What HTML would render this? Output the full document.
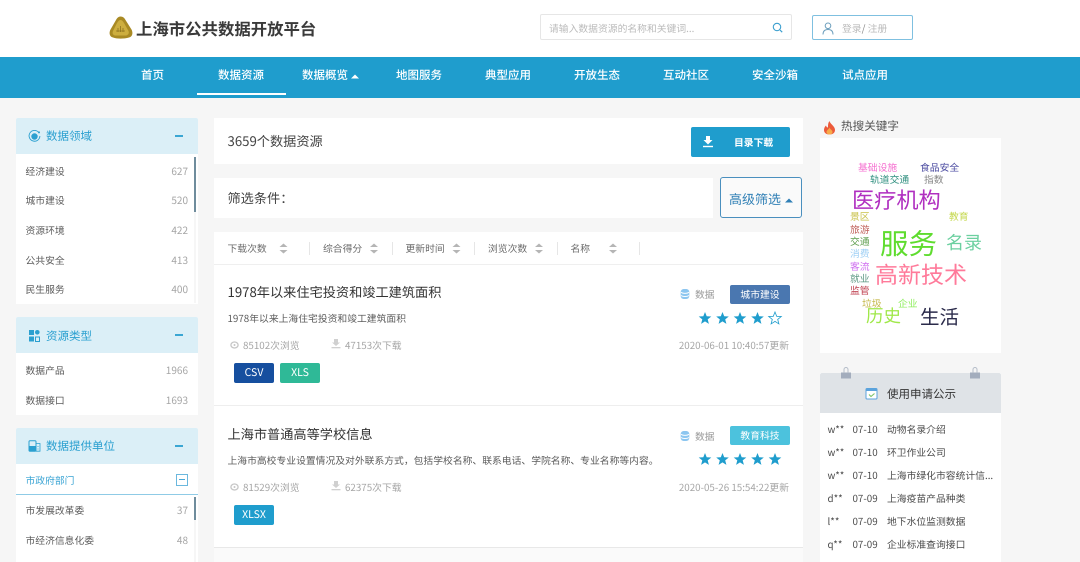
<!DOCTYPE html>
<html lang="zh">
<head>
<meta charset="utf-8">
<title>上海市公共数据开放平台</title>
<style>
html,body{margin:0;padding:0;width:1080px;height:562px;overflow:hidden;background:#f6f6f6}
body{position:relative;font-family:"Noto Sans CJK SC","Liberation Sans",sans-serif;color:#555;text-rendering:geometricPrecision}
#p{position:absolute;left:0;top:0;width:1080px;height:562px;overflow:hidden;filter:blur(.3px)}
.b{position:absolute;box-sizing:border-box}
.t{position:absolute;white-space:nowrap;line-height:20px;margin-top:-10px}
.r{text-align:right}
.n{font-size:11.5px;color:#fff;font-weight:500}
.h{font-size:11.5px;color:#2ba0d0}
.i{font-size:9.8px;color:#5c5c5c;left:25.5px;margin-top:-10.5px}
.c{font-size:10px;color:#a5a5a5;right:892px;margin-top:-10.5px}
.s{font-size:9.8px;color:#6c6c6c}
.ti{font-size:13.2px;color:#333;left:227.5px}
.d{font-size:9.8px;color:#5c5c5c;left:227.5px}
.m{font-size:9.8px;color:#a5a5a5}
.w{font-size:9.8px;line-height:14px;margin-top:-7px}
.u{font-size:9.8px;color:#4c4c4c;margin-top:-10.5px}
.tag{position:absolute;box-sizing:border-box;border-radius:2px;color:#fff;text-align:center;font-size:10.5px;line-height:20px;height:20px}
.mn{position:absolute;left:175px;width:8px;height:2px;background:#3aa6d3}
svg{position:absolute;overflow:visible}
</style>
</head>
<body>
<div id="p">
<!-- header -->
<div class="b" style="left:0;top:0;width:1080px;height:57px;background:#fff"></div>
<svg style="left:109px;top:16px" width="24" height="23" viewBox="0 0 24 23">
<path d="M11.500 .5C14 .5 15.500 2 16.500 4L22.500 13.500C24.500 17.500 23 21 20 21.500C15 23 8 23 4 21.500C1 21 -.5 17.500 1.500 13.500L7 4C8 2 9.500 .5 11.500 .5Z" fill="#a98a24"/>
<path d="M11.500 4C13 4 14 5.500 15 7L19.500 15C20.500 17.500 19 19 17 19.500H6C4 19 3 17.500 4 15L8 7C9 5.500 10 4 11.500 4Z" fill="#cdae3f"/>
<path d="M7 15h9M9 12v4M11.500 10v6M14 12v4" stroke="#8e7420" stroke-width=".8" fill="none"/>
</svg>
<div class="t" style="left:136px;top:28px;font-size:16.4px;font-weight:700;color:#3a3a3a">上海市公共数据开放平台</div>
<div class="b" style="left:540px;top:14px;width:252px;height:26px;border:1px solid #e6e6e6;border-radius:2px;background:#fff"></div>
<div class="t" style="left:549px;top:28px;font-size:9.8px;color:#bbb">请输入数据资源的名称和关键词...</div>
<svg style="left:772px;top:22px" width="11" height="11" viewBox="0 0 11 11"><circle cx="5" cy="5" r="3.7" fill="none" stroke="#3c9fcf" stroke-width="1.1"/><path d="M8 8l2.200 2.200" stroke="#3c9fcf" stroke-width="1.200"/></svg>
<div class="b" style="left:812px;top:15px;width:101px;height:25px;border:1px solid #7fc0e0;border-radius:2px;background:#fff"></div>
<svg style="left:822px;top:22px" width="12" height="13" viewBox="0 0 12 13"><circle cx="6" cy="3.800" r="2.800" fill="none" stroke="#6d9fbd" stroke-width="1"/><path d="M1 12.500C1 9 3 7.500 6 7.500S11 9 11 12.500" fill="none" stroke="#6d9fbd" stroke-width="1"/></svg>
<div class="t" style="left:842px;top:28px;font-size:9.800px;color:#bbb">登录<span style="color:#888">/</span> 注册</div>

<!-- nav -->
<div class="b" style="left:0;top:57px;width:1080px;height:41px;background:#1f9dcd"></div>
<div class="t n" style="left:141px;top:75px">首页</div>
<div class="t n" style="left:218px;top:75px">数据资源</div>
<div class="t n" style="left:302px;top:75px">数据概览</div>
<svg style="left:351px;top:74px" width="8" height="5" viewBox="0 0 8 5"><path d="M0 4.500L4 .5L8 4.500Z" fill="#fff"/></svg>
<div class="t n" style="left:396px;top:75px">地图服务</div>
<div class="t n" style="left:485px;top:75px">典型应用</div>
<div class="t n" style="left:574px;top:75px">开放生态</div>
<div class="t n" style="left:663px;top:75px">互动社区</div>
<div class="t n" style="left:752px;top:75px">安全沙箱</div>
<div class="t n" style="left:842px;top:75px">试点应用</div>
<div class="b" style="left:197px;top:93px;width:89px;height:2px;background:#fff"></div>

<!-- left panel 1 -->
<div class="b" style="left:16px;top:118px;width:182px;height:186px;background:#fff;border-radius:2px 2px 0 0"></div>
<div class="b" style="left:16px;top:118px;width:182px;height:36px;background:#dbeff7;border-radius:2px 2px 0 0"></div>
<svg style="left:28px;top:130px" width="13" height="13" viewBox="0 0 13 13"><path d="M10.500 2.200A5.400 5.400 0 1 0 11.900 6" fill="none" stroke="#2ba0d0" stroke-width=".9"/><circle cx="6.500" cy="6.500" r="3.200" fill="#2ba0d0"/><circle cx="11" cy="2.400" r="1" fill="#2ba0d0"/></svg>
<div class="t h" style="left:46px;top:136px">数据领域</div>
<div class="mn" style="top:135px"></div>
<div class="t i" style="top:171px">经济建设</div><div class="t c" style="top:171px">627</div>
<div class="t i" style="top:200px">城市建设</div><div class="t c" style="top:200px">520</div>
<div class="t i" style="top:230px">资源环境</div><div class="t c" style="top:230px">422</div>
<div class="t i" style="top:260px">公共安全</div><div class="t c" style="top:260px">413</div>
<div class="t i" style="top:289px">民生服务</div><div class="t c" style="top:289px">400</div>
<div class="b" style="left:194px;top:157px;width:2px;height:146px;background:#f6f6f6"></div>
<div class="b" style="left:194px;top:157px;width:2px;height:55px;background:#6f8c9c"></div>

<!-- left panel 2 -->
<div class="b" style="left:16px;top:317px;width:182px;height:98px;background:#fff;border-radius:2px 2px 0 0"></div>
<div class="b" style="left:16px;top:317px;width:182px;height:36px;background:#dbeff7;border-radius:2px 2px 0 0"></div>
<svg style="left:28px;top:329px" width="12" height="13" viewBox="0 0 12 13"><rect x="1" y="1" width="5" height="5" fill="#2ba0d0"/><circle cx="9.300" cy="3.300" r="2.300" fill="#2ba0d0"/><rect x="1" y="7.500" width="5" height="5" fill="#2ba0d0"/><rect x="7.500" y="8" width="4" height="4.500" fill="none" stroke="#2ba0d0"/></svg>
<div class="t h" style="left:46px;top:336px">资源类型</div>
<div class="mn" style="top:334px"></div>
<div class="t i" style="top:370px">数据产品</div><div class="t c" style="top:370px">1966</div>
<div class="t i" style="top:400px">数据接口</div><div class="t c" style="top:400px">1693</div>

<!-- left panel 3 -->
<div class="b" style="left:16px;top:428px;width:182px;height:134px;background:#fff;border-radius:2px 2px 0 0"></div>
<div class="b" style="left:16px;top:428px;width:182px;height:36px;background:#dbeff7;border-radius:2px 2px 0 0"></div>
<svg style="left:28px;top:440px" width="13" height="12" viewBox="0 0 13 12"><rect x="1" y=".8" width="7" height="10.400" rx="1" fill="none" stroke="#2ba0d0"/><rect x="1" y="6" width="7" height="5.200" fill="#2ba0d0"/><path d="M8 3.500h4v7.700H8M10 6v1M10 8.500v1" fill="none" stroke="#2ba0d0" stroke-width=".8"/></svg>
<div class="t h" style="left:46px;top:446px">数据提供单位</div>
<div class="mn" style="top:445px"></div>
<div class="t" style="left:25.500px;top:480px;font-size:9.800px;color:#3aa4d4">市政府部门</div>
<div class="b" style="left:176px;top:474px;width:12px;height:12px;border:1px solid #6bb8de"></div>
<div class="b" style="left:179px;top:479px;width:6px;height:1px;background:#4aa8d6"></div>
<div class="b" style="left:16px;top:494px;width:182px;height:1px;background:#8fcbe6"></div>
<div class="t i" style="top:510px">市发展改革委</div><div class="t c" style="top:510px">37</div>
<div class="t i" style="top:540px">市经济信息化委</div><div class="t c" style="top:540px">48</div>
<div class="b" style="left:194px;top:497px;width:2px;height:65px;background:#f6f6f6"></div>
<div class="b" style="left:194px;top:497px;width:2px;height:23px;background:#6f8c9c"></div>

<!-- main top -->
<div class="b" style="left:214px;top:118px;width:589px;height:46px;background:#fff"></div>
<div class="t" style="left:227.500px;top:141px;font-size:13.200px;color:#444">3659个数据资源</div>
<div class="b" style="left:691px;top:127px;width:99px;height:30px;background:#1f9dcd;border-radius:2px"></div>
<svg style="left:702px;top:136px" width="12" height="12" viewBox="0 0 12 12"><path d="M4 0h4v4h2.500L6 8.500 1.500 4H4Z" fill="#fff"/><rect x="1" y="9.800" width="10" height="1.400" fill="#fff"/></svg>
<div class="t" style="left:734px;top:142px;font-size:9.800px;font-weight:700;color:#fff">目录下载</div>

<div class="b" style="left:214px;top:178px;width:499px;height:40px;background:#fff"></div>
<div class="t" style="left:227.500px;top:198px;font-size:13.200px;color:#444">筛选条件：</div>
<div class="b" style="left:720px;top:177px;width:82px;height:41px;border:1px solid #4a8fbe;border-radius:3px;background:#fafafa"></div>
<div class="t" style="left:729px;top:199px;font-size:13px;color:#2f7fb5">高级筛选</div>
<svg style="left:785px;top:198px" width="8" height="5" viewBox="0 0 8 5"><path d="M0 4.500L4 .5L8 4.500Z" fill="#2f7fb5"/></svg>

<!-- sort -->
<div class="b" style="left:214px;top:232px;width:589px;height:32px;background:#fff"></div>
<div class="b" style="left:214px;top:264px;width:589px;height:1px;background:#efefef"></div>
<div class="t s" style="left:227.500px;top:248px">下载次数</div>
<div class="t s" style="left:323px;top:248px">综合得分</div>
<div class="t s" style="left:405.500px;top:248px">更新时间</div>
<div class="t s" style="left:488px;top:248px">浏览次数</div>
<div class="t s" style="left:570.500px;top:248px">名称</div>
<svg style="left:214px;top:232px" width="589" height="32" viewBox="0 0 589 32">
<g fill="#b5b5b5">
<path d="M65.500 15l4-3.500 4 3.500zM65.500 18l4 3.500 4-3.500z"/>
<path d="M156 15l4-3.500 4 3.500zM156 18l4 3.500 4-3.500z"/>
<path d="M238.500 15l4-3.500 4 3.500zM238.500 18l4 3.500 4-3.500z"/>
<path d="M321 15l4-3.500 4 3.500zM321 18l4 3.500 4-3.500z"/>
<path d="M395 15l4-3.500 4 3.500zM395 18l4 3.500 4-3.500z"/>
</g>
<g fill="#e6e6e6"><rect x="95" y="10" width="1" height="13"/><rect x="178" y="10" width="1" height="13"/><rect x="260" y="10" width="1" height="13"/><rect x="343" y="10" width="1" height="13"/><rect x="425" y="10" width="1" height="13"/></g>
</svg>

<!-- item 1 -->
<div class="b" style="left:214px;top:265px;width:589px;height:140px;background:#fff"></div>
<div class="b" style="left:214px;top:405px;width:589px;height:1px;background:#eee"></div>
<div class="t ti" style="top:292px">1978年以来住宅投资和竣工建筑面积</div>
<div class="t d" style="top:318px">1978年以来上海住宅投资和竣工建筑面积</div>
<svg style="left:230px;top:341px" width="9" height="8" viewBox="0 0 9 8"><ellipse cx="4.500" cy="4" rx="3.600" ry="3" fill="none" stroke="#c5c5c5" stroke-width="1.300"/><circle cx="4.500" cy="4" r="1" fill="#c5c5c5"/></svg>
<div class="t m" style="left:243px;top:345px">85102次浏览</div>
<svg style="left:331px;top:339px" width="10" height="10" viewBox="0 0 10 10"><path d="M3 0h4v3.500h2L5 7 1 3.500h2Z" fill="#d0d0d0"/><rect x=".5" y="8" width="9" height="1.300" fill="#d0d0d0"/></svg>
<div class="t m" style="left:345px;top:345px">47153次下载</div>
<div class="t m r" style="right:291px;top:345px">2020-06-01 10:40:57更新</div>
<svg style="left:680px;top:288px" width="10" height="12" viewBox="0 0 10 12"><rect x=".7" y="1" width="8.600" height="10" rx="3" fill="#8cc6f0"/><path d="M1 4.300c2 1.400 6 1.400 8 0M1 7.500c2 1.400 6 1.400 8 0" stroke="#fff" fill="none"/></svg>
<div class="t" style="left:695px;top:294px;font-size:9.800px;color:#999">数据</div>
<div class="tag" style="left:730px;top:285px;width:60px;height:19px;line-height:19px;background:#4a77b0;font-size:9.800px">城市建设</div>
<svg style="left:698px;top:311px" width="84" height="15" viewBox="0 0 84 15">
<defs><path id="st" d="M0-6.500L1.700-2.200 6.300-2 2.700 .9 3.900 5.400 0 2.900-3.900 5.400-2.700 .9-6.300-2-1.700-2.200Z"/></defs>
<use href="#st" x="7" y="7.500" fill="#1f9dcd"/><use href="#st" x="24.500" y="7.500" fill="#1f9dcd"/><use href="#st" x="42" y="7.500" fill="#1f9dcd"/><use href="#st" x="59.500" y="7.500" fill="#1f9dcd"/><use href="#st" x="77" y="7.500" fill="#fff" stroke="#1f9dcd" stroke-width=".8"/>
</svg>
<div class="tag" style="left:234px;top:363px;width:40px;background:#164f9f">CSV</div>
<div class="tag" style="left:280px;top:363px;width:40px;background:#2fb997">XLS</div>

<!-- item 2 -->
<div class="b" style="left:214px;top:406px;width:589px;height:141px;background:#fff"></div>
<div class="b" style="left:214px;top:547px;width:589px;height:1px;background:#e8e8e8"></div>
<div class="b" style="left:214px;top:548px;width:589px;height:14px;background:#fafafa"></div>
<div class="t ti" style="top:434px">上海市普通高等学校信息</div>
<div class="t d" style="top:460px">上海市高校专业设置情况及对外联系方式，包括学校名称、联系电话、学院名称、专业名称等内容。</div>
<svg style="left:230px;top:483px" width="9" height="8" viewBox="0 0 9 8"><ellipse cx="4.500" cy="4" rx="3.600" ry="3" fill="none" stroke="#c5c5c5" stroke-width="1.300"/><circle cx="4.500" cy="4" r="1" fill="#c5c5c5"/></svg>
<div class="t m" style="left:243px;top:487px">81529次浏览</div>
<svg style="left:331px;top:481px" width="10" height="10" viewBox="0 0 10 10"><path d="M3 0h4v3.500h2L5 7 1 3.500h2Z" fill="#d0d0d0"/><rect x=".5" y="8" width="9" height="1.300" fill="#d0d0d0"/></svg>
<div class="t m" style="left:345px;top:487px">62375次下载</div>
<div class="t m r" style="right:291px;top:487px">2020-05-26 15:54:22更新</div>
<svg style="left:680px;top:430px" width="10" height="12" viewBox="0 0 10 12"><rect x=".7" y="1" width="8.600" height="10" rx="3" fill="#8cc6f0"/><path d="M1 4.300c2 1.400 6 1.400 8 0M1 7.500c2 1.400 6 1.400 8 0" stroke="#fff" fill="none"/></svg>
<div class="t" style="left:695px;top:436px;font-size:9.800px;color:#999">数据</div>
<div class="tag" style="left:730px;top:426px;width:60px;height:19px;line-height:19px;background:#4cc2dd;font-size:9.800px">教育科技</div>
<svg style="left:698px;top:452px" width="84" height="15" viewBox="0 0 84 15">
<use href="#st" x="7" y="7.500" fill="#1f9dcd"/><use href="#st" x="24.500" y="7.500" fill="#1f9dcd"/><use href="#st" x="42" y="7.500" fill="#1f9dcd"/><use href="#st" x="59.500" y="7.500" fill="#1f9dcd"/><use href="#st" x="77" y="7.500" fill="#1f9dcd"/>
</svg>
<div class="tag" style="left:234px;top:505px;width:40px;background:#1f9dcd">XLSX</div>

<!-- hot keywords -->
<svg style="left:823px;top:120px" width="13" height="15" viewBox="0 0 13 15"><path d="M6.500 1C7 4 12 6 12 10C12 13 9.500 14.500 6.500 14.500S1 13 1 10C1 8 2 6.500 3 5.500C3.500 7 4 7.500 5 7.500C5 5 5 3 6.500 1Z" fill="#ec5a3a"/><path d="M6.500 7.500C7 9.500 9.500 10 9.500 12C9.500 13.500 8 14.500 6.500 14.500S3.500 13.500 3.500 12C3.500 10 6 9.500 6.500 7.500Z" fill="#f7ab4a"/></svg>
<div class="t" style="left:841px;top:126px;font-size:11.600px;color:#555">热搜关键字</div>
<div class="b" style="left:820px;top:138px;width:181px;height:215px;background:#fff"></div>
<div class="t w" style="left:858px;top:167px;color:#f56fd0">基础设施</div>
<div class="t w" style="left:920px;top:167px;color:#4a4aa0">食品安全</div>
<div class="t w" style="left:870px;top:179px;color:#2f8f7f">轨道交通</div>
<div class="t w" style="left:924px;top:179px;color:#888">指数</div>
<div class="t w" style="left:852px;top:199px;font-size:22.200px;line-height:30px;margin-top:-15px;color:#b02fc0">医疗机构</div>
<div class="t w" style="left:850px;top:216px;color:#c9c24a">景区</div>
<div class="t w" style="left:949px;top:216px;color:#c5d84f">教育</div>
<div class="t w" style="left:850px;top:229px;color:#c0605a">旅游</div>
<div class="t w" style="left:850px;top:241px;color:#5e9e4f">交通</div>
<div class="t w" style="left:850px;top:253px;color:#9fd0f5">消费</div>
<div class="t w" style="left:850px;top:266px;color:#d070f0">客流</div>
<div class="t w" style="left:850px;top:278px;color:#5f9a85">就业</div>
<div class="t w" style="left:850px;top:290px;color:#c04050">监管</div>
<div class="t w" style="left:880px;top:243px;font-size:28.500px;line-height:36px;margin-top:-18px;color:#5fdc2f">服务</div>
<div class="t w" style="left:946px;top:242px;font-size:18px;line-height:24px;margin-top:-12px;color:#6cd0a0">名录</div>
<div class="t w" style="left:875px;top:273px;font-size:23px;line-height:30px;margin-top:-15px;color:#ff7a9a">高新技术</div>
<div class="t w" style="left:862px;top:303px;color:#c5b84a">垃圾</div>
<div class="t w" style="left:898px;top:303px;color:#90ee60">企业</div>
<div class="t w" style="left:866px;top:316px;font-size:17.500px;line-height:24px;margin-top:-12px;color:#a0e84a">历史</div>
<div class="t w" style="left:920px;top:316px;font-size:19.500px;line-height:26px;margin-top:-13px;color:#2a2a4a">生活</div>

<!-- apply list -->
<div class="b" style="left:820px;top:373px;width:181px;height:189px;background:#fff"></div>
<div class="b" style="left:820px;top:373px;width:181px;height:40px;background:#dfe3e7;border-radius:2px 2px 0 0"></div>
<svg style="left:840px;top:367px" width="12" height="12" viewBox="0 0 12 12"><rect x="1" y="5.500" width="10" height="6" fill="#a3adbd"/><path d="M4 6V2.500a2 2 0 0 1 4 0V6" fill="none" stroke="#b5bdc9"/></svg>
<svg style="left:969px;top:367px" width="12" height="12" viewBox="0 0 12 12"><rect x="1" y="5.500" width="10" height="6" fill="#a3adbd"/><path d="M4 6V2.500a2 2 0 0 1 4 0V6" fill="none" stroke="#b5bdc9"/></svg>
<svg style="left:865px;top:387px" width="13" height="13" viewBox="0 0 13 13"><rect x="1" y="1.500" width="11" height="10.500" rx="1" fill="#fff" stroke="#5ba3dc" stroke-width="1"/><rect x="1" y="1.500" width="11" height="2.500" fill="#5ba3dc"/><path d="M4 7.500l2 2 3.500-3" fill="none" stroke="#7cc36a" stroke-width="1.100"/></svg>
<div class="t" style="left:887px;top:394px;font-size:11.500px;color:#333">使用申请公示</div>
<div class="t u" style="left:827.500px;top:429px">w**</div><div class="t u" style="left:852.500px;top:429px">07-10</div><div class="t u" style="left:887px;top:429px">动物名录介绍</div>
<div class="t u" style="left:827.500px;top:452px">w**</div><div class="t u" style="left:852.500px;top:452px">07-10</div><div class="t u" style="left:887px;top:452px">环卫作业公司</div>
<div class="t u" style="left:827.500px;top:475px">w**</div><div class="t u" style="left:852.500px;top:475px">07-10</div><div class="t u" style="left:887px;top:475px">上海市绿化市容统计信...</div>
<div class="t u" style="left:827.500px;top:498px">d**</div><div class="t u" style="left:852.500px;top:498px">07-09</div><div class="t u" style="left:887px;top:498px">上海疫苗产品种类</div>
<div class="t u" style="left:827.500px;top:521px">l**</div><div class="t u" style="left:852.500px;top:521px">07-09</div><div class="t u" style="left:887px;top:521px">地下水位监测数据</div>
<div class="t u" style="left:827.500px;top:544px">q**</div><div class="t u" style="left:852.500px;top:544px">07-09</div><div class="t u" style="left:887px;top:544px">企业标准查询接口</div>
</div>
</body>
</html>
